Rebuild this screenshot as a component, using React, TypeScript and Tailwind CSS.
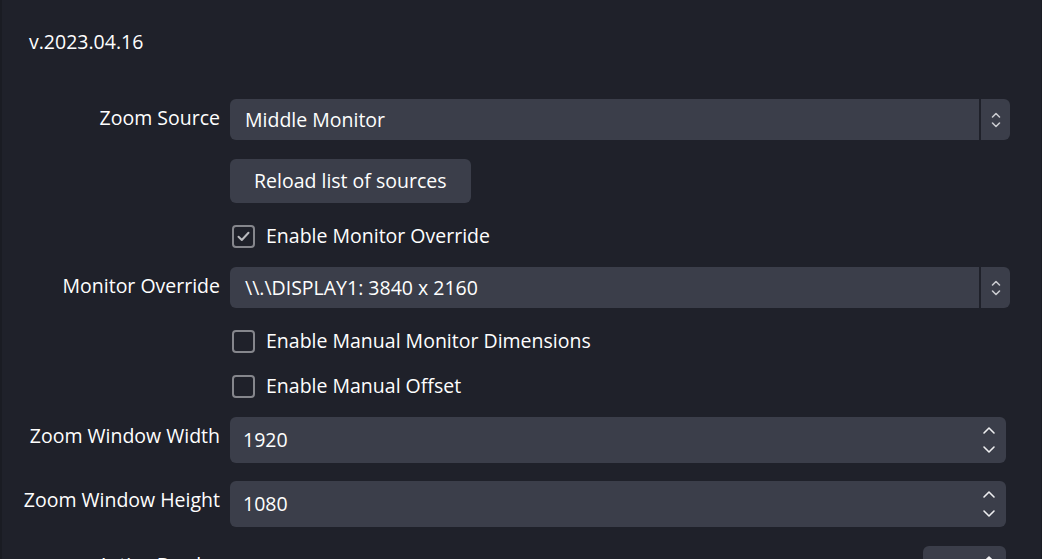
import React from 'react';

const font = { fontFamily: '"Open Sans", "Noto Sans", sans-serif' };

const Chevrons = ({ small }: { small?: boolean }) => (
  <svg
    width={small ? 12 : 14}
    height={small ? 22 : 30}
    viewBox={small ? '0 0 12 22' : '0 0 14 30'}
    fill="none"
    stroke={small ? '#c9cacf' : '#eeeef0'}
    strokeWidth={1.6}
    strokeLinecap="round"
    strokeLinejoin="round"
  >
    {small ? (
      <>
        <path d="M2.5 8 L6 4.5 L9.5 8" />
        <path d="M2.5 14 L6 17.5 L9.5 14" />
      </>
    ) : (
      <>
        <path d="M2 8 L7 3 L12 8" />
        <path d="M2 22 L7 27 L12 22" />
      </>
    )}
  </svg>
);

const Select = ({ value }: { value: string }) => (
  <div className="flex h-[41px] items-stretch rounded-[6px] bg-[#3b3e4a]">
    <div className="flex flex-1 items-center pl-[15px] text-[19.5px] text-[#fefefe]">{value}</div>
    <div className="w-[2px] bg-[#1f212a]" />
    <div className="flex w-[29px] items-center justify-center">
      <Chevrons small />
    </div>
  </div>
);

const SpinBox = ({ value }: { value: string }) => (
  <div className="mr-[4px] flex h-[46px] items-center rounded-[6px] bg-[#3b3e4a]">
    <div className="flex-1 pl-[13px] text-[19.5px] text-[#fefefe]">{value}</div>
    <div className="flex w-[34px] items-center justify-center">
      <Chevrons />
    </div>
  </div>
);

const CheckBox = ({ label, checked }: { label: string; checked?: boolean }) => (
  <div className="flex h-[26px] items-center gap-[11px] pl-[2px]">
    <div className="flex h-[23px] w-[23px] items-center justify-center rounded-[4px] border-2 border-[#85868c]">
      {checked && (
        <svg width="15" height="15" viewBox="0 0 15 15" fill="none" stroke="#b9babe" strokeWidth={2} strokeLinecap="round" strokeLinejoin="round">
          <path d="M2.5 7.8 L5.8 11 L12.5 3.8" />
        </svg>
      )}
    </div>
    <span className="text-[19.5px] text-[#fefefe]">{label}</span>
  </div>
);

const Row = ({ label, className, children }: { label?: string; className?: string; children: React.ReactNode }) => (
  <div className={`flex items-start gap-x-[10px] ${className ?? ''}`}>
    <div className="w-[218px] shrink-0 whitespace-nowrap pt-[6px] text-right text-[19.5px] leading-[26px] text-[#fefefe]">
      {label}
    </div>
    <div className="min-w-0 flex-1">{children}</div>
  </div>
);

export default function App() {
  return (
    <div
      className="h-[559px] w-[1042px] overflow-hidden border-l-2 border-r border-[#1a1c23] bg-[#1f212a] pr-[31px]"
      style={font}
    >
      <div className="mt-[29px] pl-[27px] text-[19.5px] leading-[26px] text-[#fefefe]">v.2023.04.16</div>
      <div className="mt-[44px] flex flex-col">
        <Row label="Zoom Source">
          <Select value="Middle Monitor" />
        </Row>

        <Row className="mt-[19px]">
          <button className="h-[44px] rounded-[6px] bg-[#3b3e4a] px-[24px] text-[19.5px] text-[#fefefe]">
            Reload list of sources
          </button>
        </Row>

        <Row className="mt-[20px]">
          <CheckBox label="Enable Monitor Override" checked />
        </Row>

        <Row label="Monitor Override" className="mt-[18px]">
          <Select value="\\.\DISPLAY1: 3840 x 2160" />
        </Row>

        <Row className="mt-[20px]">
          <CheckBox label="Enable Manual Monitor Dimensions" />
        </Row>

        <Row className="mt-[19px]">
          <CheckBox label="Enable Manual Offset" />
        </Row>

        <Row label="Zoom Window Width" className="mt-[18px]">
          <SpinBox value="1920" />
        </Row>

        <Row label="Zoom Window Height" className="mt-[18px]">
          <SpinBox value="1080" />
        </Row>

        <Row label="Active Border" className="mt-[19px]">
          <div className="flex justify-end">
            <div className="mr-[4px] flex h-[46px] w-[83px] items-center justify-end rounded-[6px] bg-[#3b3e4a]">
              <div className="flex w-[34px] items-center justify-center">
                <Chevrons />
              </div>
            </div>
          </div>
        </Row>
      </div>
    </div>
  );
}
